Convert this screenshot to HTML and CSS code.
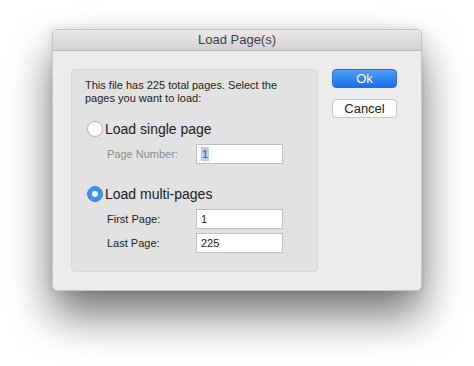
FILE: index.html
```html
<!DOCTYPE html>
<html>
<head>
<meta charset="utf-8">
<link rel="stylesheet" href="styles.css">
</head>
<body>
<div class="window">
  <div class="titlebar">Load Page(s)</div>
  <div class="content">
    <div class="panel">
      <p class="intro">This file has 225 total pages. Select the pages you want to load:</p>
      <div class="option">
        <span class="radio"></span>
        <span class="option-label">Load single page</span>
      </div>
      <div class="field muted">
        <span class="field-label">Page Number:</span>
        <span class="input"><span class="selected">1</span></span>
      </div>
      <div class="option second">
        <span class="radio checked"></span>
        <span class="option-label">Load multi-pages</span>
      </div>
      <div class="field">
        <span class="field-label">First Page:</span>
        <span class="input">1</span>
      </div>
      <div class="field">
        <span class="field-label">Last Page:</span>
        <span class="input">225</span>
      </div>
    </div>
    <div class="buttons">
      <button class="btn primary">Ok</button>
      <button class="btn">Cancel</button>
    </div>
  </div>
</div>
</body>
</html>
```
FILE: styles.css
```css
html, body {
  margin: 0;
  padding: 0;
  background: #ffffff;
}
html {
  height: 100%;
}
body {
  min-height: 100%;
  box-sizing: border-box;
  font-family: "Liberation Sans", Arial, sans-serif;
  color: #1a1a1a;
  padding: 29px 0 0 52px;
}
.window {
  width: 370px;
  height: 262px;
  box-sizing: border-box;
  background: #ececec;
  border: 1px solid #c4c4c4;
  border-radius: 5px;
  box-shadow: 0 24px 44px rgba(0, 0, 0, 0.55), 0 0 10px rgba(0, 0, 0, 0.10);
  overflow: hidden;
  display: flex;
  flex-direction: column;
}
.titlebar {
  height: 20px;
  flex: none;
  background: linear-gradient(#e9e7e9, #d4d2d4);
  border-bottom: 1px solid #b9b9b9;
  text-align: center;
  font-size: 13px;
  line-height: 20px;
  color: #3d3d3d;
}
.content {
  display: flex;
  padding: 18px 0 0 18px;
  gap: 14px;
  align-items: flex-start;
}
.panel {
  width: 247px;
  height: 203px;
  box-sizing: border-box;
  background: #e2e2e2;
  border: 1px solid #d9d9d9;
  border-radius: 4px;
  padding: 9px 14px 0 13px;
}
.intro {
  margin: 0;
  font-size: 11px;
  line-height: 13px;
  width: 205px;
  color: #1c1c1c;
}
.option {
  display: flex;
  align-items: center;
  margin-top: 15px;
  height: 18px;
}
.option.second {
  margin-top: 21px;
}
.radio {
  width: 16px;
  height: 16px;
  box-sizing: border-box;
  border-radius: 50%;
  background: #ffffff;
  border: 1px solid #b5b5b5;
  margin-left: 2px;
  margin-right: 2px;
  flex: none;
}
.radio.checked {
  background: #3a92f2;
  border: 1px solid #3285e6;
  display: flex;
  align-items: center;
  justify-content: center;
}
.radio.checked::after {
  content: "";
  width: 6px;
  height: 6px;
  border-radius: 50%;
  background: #ffffff;
}
.option-label {
  font-size: 14px;
  color: #1a1a1a;
}
.field {
  display: flex;
  align-items: center;
  margin-top: 4px;
  height: 20px;
  padding-left: 22px;
}
.option + .field {
  margin-top: 6px;
}
.field-label {
  width: 89px;
  font-size: 11px;
  color: #1c1c1c;
}
.field.muted .field-label {
  color: #8a8a8a;
}
.input {
  width: 87px;
  height: 20px;
  box-sizing: border-box;
  background: #ffffff;
  border: 1px solid #c2c2c2;
  font-size: 11px;
  line-height: 18px;
  padding-left: 4px;
  color: #1c1c1c;
}
.selected {
  background: #b4d0f4;
  color: #3a5f9a;
  padding: 1px 1px;
}
.buttons {
  display: flex;
  flex-direction: column;
  gap: 11px;
}
.btn {
  width: 65px;
  height: 19px;
  box-sizing: border-box;
  border-radius: 4px;
  font-family: "Liberation Sans", Arial, sans-serif;
  font-size: 13px;
  line-height: 17px;
  padding: 0;
  background: #ffffff;
  border: 1px solid #c6c6c6;
  color: #222222;
}
.btn.primary {
  background: linear-gradient(#4fa0f7, #1a6fe8);
  border: 1px solid #2c6fd6;
  color: #ffffff;
}
```
